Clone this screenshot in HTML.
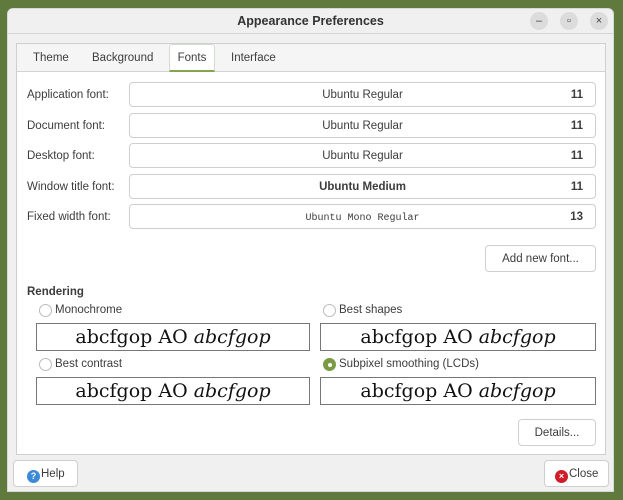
<!DOCTYPE html>
<html><head><meta charset="utf-8"><style>
*{box-sizing:border-box;margin:0;padding:0}
body{width:623px;height:500px;overflow:hidden;background:#5f7a3c;font-family:"Liberation Sans",sans-serif;font-size:11.5px;color:#3c3c3c;position:relative}
.abs{position:absolute}
.win{left:7px;top:8px;width:607px;height:484px;background:#f0f0f0;border-radius:6px 6px 0 0;border:1px solid #d8d8d8}
.title{left:7px;top:8px;width:607px;height:26px;border-bottom:1px solid #d4d4d4;text-align:center;line-height:26px;font-size:12.5px;font-weight:bold;color:#333}
.wb{width:18px;height:18px;border-radius:50%;background:#dcdcdc;top:12px;text-align:center;line-height:18px;font-size:11px;color:#444}
.nb{left:16px;top:43px;width:590px;height:412px;background:#fff;border:1px solid #cfcfcf}
.tabs{left:17px;top:44px;width:588px;height:28px;background:#f5f5f5;border-bottom:1px solid #d3d3d3}
.tab{top:45px;height:28px;line-height:27px}
.lbl{left:27px;line-height:14px}
.entry{left:129px;width:467px;height:25px;border:1px solid #cfcfcf;border-radius:4px;background:#fff;text-align:center;line-height:25px}
.entry b.n{position:absolute;right:12px;top:0;font-weight:bold}
.btn{border:1px solid #cfcfcf;border-radius:4px;background:#fff;text-align:center;line-height:26px;height:27px}
.radio{width:13px;height:13px;border-radius:50%;border:1px solid #bbb;background:#fff}
.prev{height:28px;border:1px solid #777;background:#fff;text-align:center;font-family:"DejaVu Serif","Liberation Serif",serif;font-size:19px;line-height:27px;color:#111}
.prev i{font-style:italic;font-weight:normal}
</style></head><body>
<div class="abs win"></div>
<div class="abs title">Appearance Preferences</div>
<div class="abs wb" style="left:530px">–</div>
<div class="abs wb" style="left:560px">▫</div>
<div class="abs wb" style="left:590px">×</div>
<div class="abs nb"></div>
<div class="abs tabs"></div>
<div class="abs tab" style="left:33px">Theme</div>
<div class="abs tab" style="left:92px">Background</div>
<div class="abs" style="left:169px;top:44px;width:46px;height:28px;background:#fff;border:1px solid #d4dccb;border-bottom:2px solid #86a34f;border-radius:3px 3px 0 0;text-align:center;line-height:26px">Fonts</div>
<div class="abs tab" style="left:231px">Interface</div>

<div class="abs lbl" style="top:88px">Application font:</div>
<div class="abs entry" style="top:82px">Ubuntu Regular<b class="n">11</b></div>
<div class="abs lbl" style="top:119px">Document font:</div>
<div class="abs entry" style="top:113px">Ubuntu Regular<b class="n">11</b></div>
<div class="abs lbl" style="top:149px">Desktop font:</div>
<div class="abs entry" style="top:143px">Ubuntu Regular<b class="n">11</b></div>
<div class="abs lbl" style="top:180px">Window title font:</div>
<div class="abs entry" style="top:174px;font-weight:bold">Ubuntu Medium<b class="n">11</b></div>
<div class="abs lbl" style="top:210px">Fixed width font:</div>
<div class="abs entry" style="top:204px"><span style="font-family:'Liberation Mono',monospace;font-size:10px">Ubuntu Mono Regular</span><b class="n">13</b></div>

<div class="abs btn" style="left:485px;top:245px;width:111px">Add new font...</div>

<div class="abs" style="left:27px;top:285px;font-weight:bold;line-height:14px">Rendering</div>
<div class="abs radio" style="left:39px;top:304px"></div>
<div class="abs" style="left:55px;top:304px;line-height:13px">Monochrome</div>
<div class="abs radio" style="left:323px;top:304px"></div>
<div class="abs" style="left:339px;top:304px;line-height:13px">Best shapes</div>
<div class="abs prev" style="left:36px;top:323px;width:274px">abcfgop AO <i>abcfgop</i></div>
<div class="abs prev" style="left:320px;top:323px;width:276px">abcfgop AO <i>abcfgop</i></div>
<div class="abs radio" style="left:39px;top:358px"></div>
<div class="abs" style="left:55px;top:358px;line-height:13px">Best contrast</div>
<div class="abs radio" style="left:323px;top:358px;background:#7b9a45;border-color:#7b9a45"><div style="position:absolute;left:3.5px;top:3.5px;width:4px;height:4px;border-radius:50%;background:#fff"></div></div>
<div class="abs" style="left:339px;top:358px;line-height:13px">Subpixel smoothing (LCDs)</div>
<div class="abs prev" style="left:36px;top:377px;width:274px">abcfgop AO <i>abcfgop</i></div>
<div class="abs prev" style="left:320px;top:377px;width:276px">abcfgop AO <i>abcfgop</i></div>

<div class="abs btn" style="left:518px;top:419px;width:78px">Details...</div>

<div class="abs btn" style="left:13px;top:460px;width:65px;text-align:left;padding-left:13px"><span style="display:inline-block;width:13px;height:13px;border-radius:50%;background:#3a8ad8;color:#fff;font-size:9px;line-height:13px;text-align:center;font-weight:bold;vertical-align:-2px;margin-right:1px">?</span>Help</div>
<div class="abs btn" style="left:544px;top:460px;width:65px;text-align:left;padding-left:10px"><span style="display:inline-block;width:13px;height:13px;border-radius:50%;background:#d01c2a;color:#fff;font-size:9px;line-height:13px;text-align:center;font-weight:bold;vertical-align:-2px;margin-right:1px">×</span>Close</div>
</body></html>
